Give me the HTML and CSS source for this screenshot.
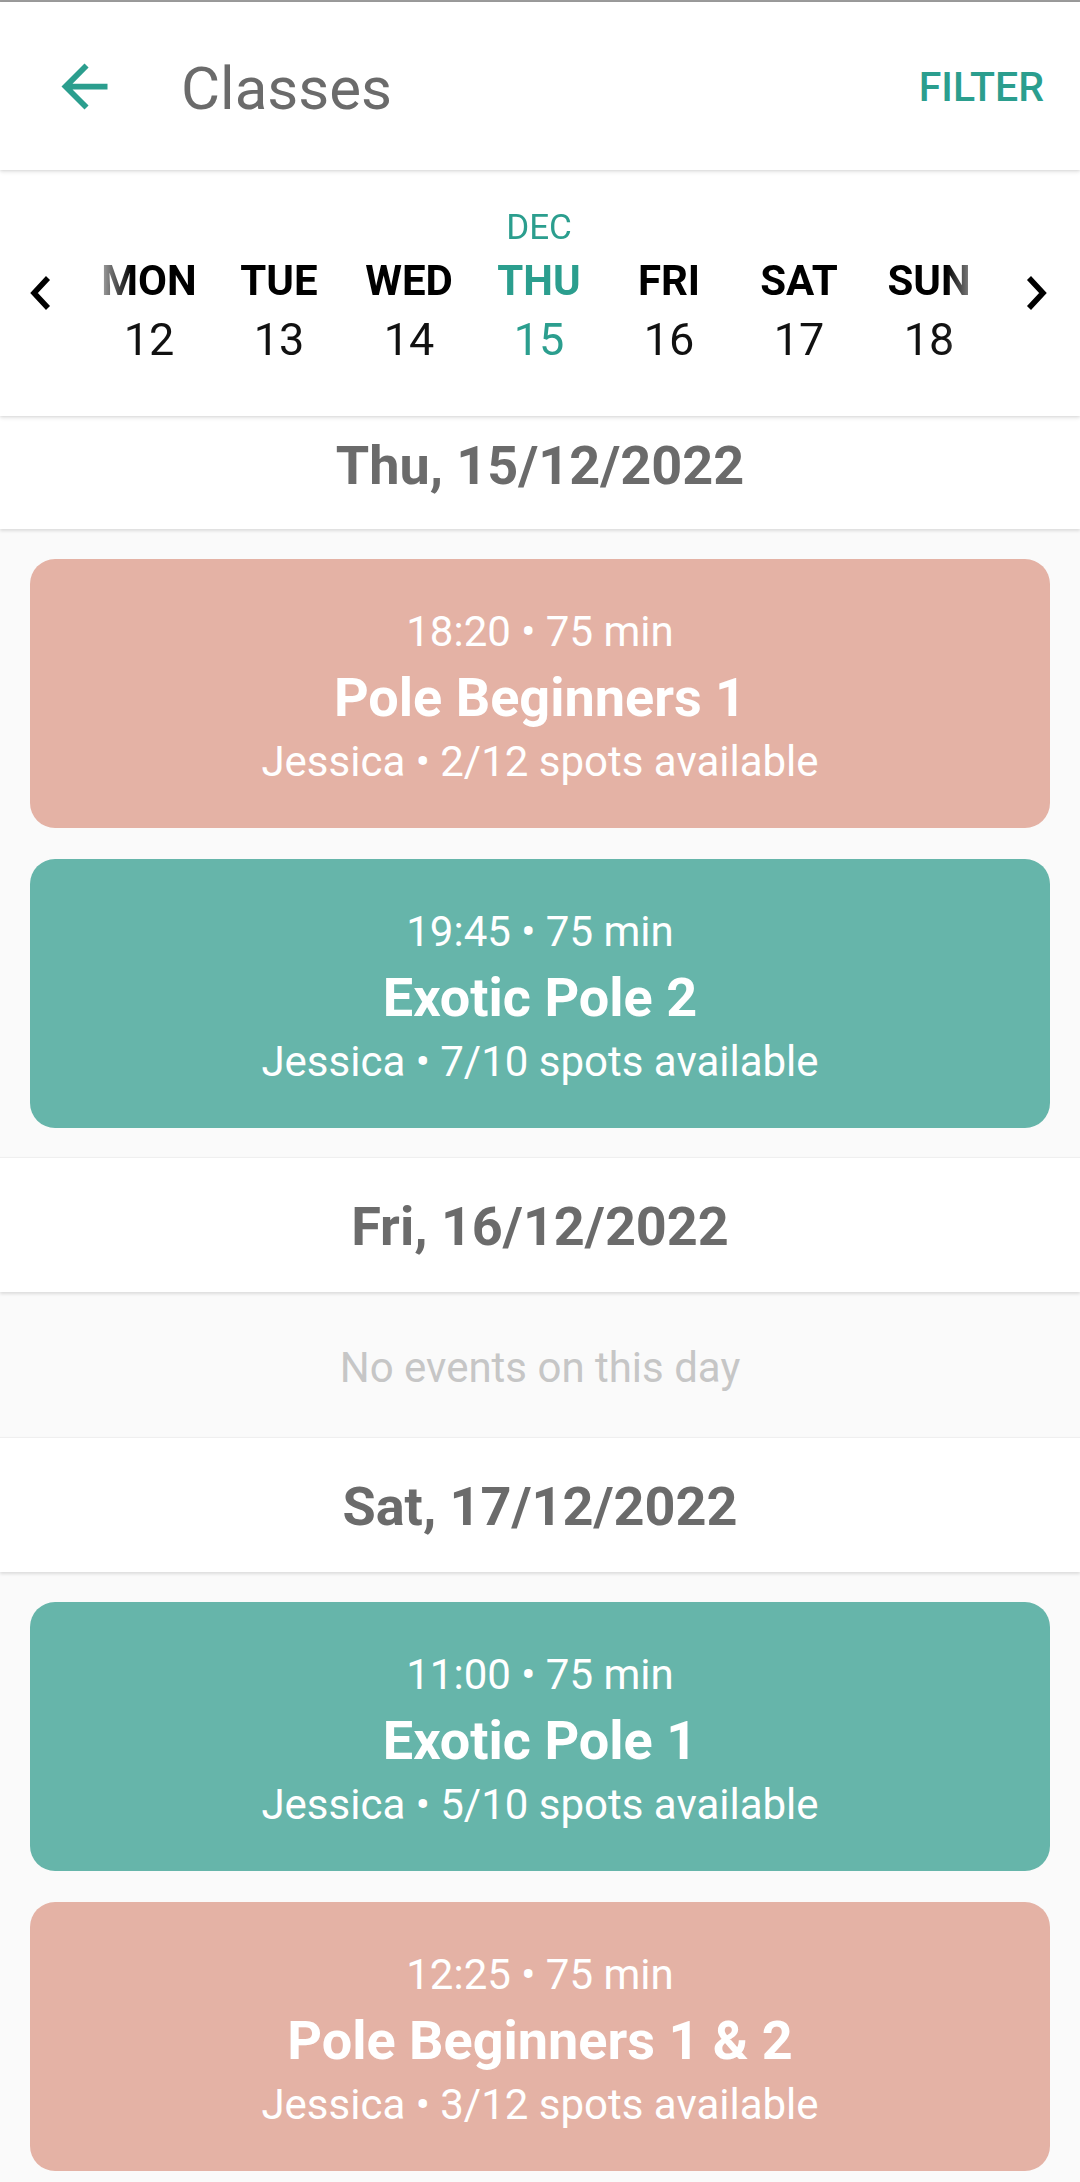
FILE: index.html
```html
<!DOCTYPE html>
<html lang="en">
<head>
<meta charset="utf-8">
<title>Classes</title>
<link rel="stylesheet" href="styles.css">
</head>
<body>
<div class="statusline"></div>
<header class="appbar">
  <button class="back" aria-label="Back">
    <svg viewBox="0 0 24 24" width="69" height="69"><path d="M20 11H7.83l5.59-5.59L12 4l-8 8 8 8 1.41-1.41L7.83 13H20v-2z" fill="#2b9e8e"/></svg>
  </button>
  <h1 class="title">Classes</h1>
  <span class="filter">FILTER</span>
</header>

<nav class="calendar">
  <button class="chev chev-left" aria-label="Previous week">
    <svg viewBox="0 0 25 36" width="25" height="36"><polyline points="20,3 6,18 20,33" fill="none" stroke="#000" stroke-width="5.5"/></svg>
  </button>
  <div class="days">
    <div class="day"><span class="month"></span><span class="dname">MON</span><span class="dnum">12</span></div>
    <div class="day"><span class="month"></span><span class="dname">TUE</span><span class="dnum">13</span></div>
    <div class="day"><span class="month"></span><span class="dname">WED</span><span class="dnum">14</span></div>
    <div class="day selected"><span class="month">DEC</span><span class="dname">THU</span><span class="dnum">15</span></div>
    <div class="day"><span class="month"></span><span class="dname">FRI</span><span class="dnum">16</span></div>
    <div class="day"><span class="month"></span><span class="dname">SAT</span><span class="dnum">17</span></div>
    <div class="day"><span class="month"></span><span class="dname">SUN</span><span class="dnum">18</span></div>
  </div>
  <button class="chev chev-right" aria-label="Next week">
    <svg viewBox="0 0 25 36" width="25" height="36"><polyline points="5,3 19,18 5,33" fill="none" stroke="#000" stroke-width="5.5"/></svg>
  </button>
</nav>

<main class="list">
  <section class="daysec">
    <h2 class="dayhead first">Thu, 15/12/2022</h2>
    <div class="cards">
      <div class="card salmon">
        <div class="ctime">18:20 • 75 min</div>
        <div class="cname">Pole Beginners 1</div>
        <div class="cinfo">Jessica • 2/12 spots available</div>
      </div>
      <div class="card teal">
        <div class="ctime">19:45 • 75 min</div>
        <div class="cname">Exotic Pole 2</div>
        <div class="cinfo">Jessica • 7/10 spots available</div>
      </div>
    </div>
  </section>
  <section class="daysec">
    <h2 class="dayhead">Fri, 16/12/2022</h2>
    <div class="empty">No events on this day</div>
  </section>
  <section class="daysec">
    <h2 class="dayhead">Sat, 17/12/2022</h2>
    <div class="cards">
      <div class="card teal">
        <div class="ctime">11:00 • 75 min</div>
        <div class="cname">Exotic Pole 1</div>
        <div class="cinfo">Jessica • 5/10 spots available</div>
      </div>
      <div class="card salmon">
        <div class="ctime">12:25 • 75 min</div>
        <div class="cname">Pole Beginners 1 &amp; 2</div>
        <div class="cinfo">Jessica • 3/12 spots available</div>
      </div>
    </div>
  </section>
</main>
</body>
</html>
```

FILE: styles.css
```css
* { box-sizing: border-box; }
html, body { margin: 0; padding: 0; }
body {
  width: 1080px;
  height: 2182px;
  overflow: hidden;
  background: #fafafa;
  font-family: Roboto, "Noto Sans", "Liberation Sans", sans-serif;
}
button {
  background: none;
  border: 0;
  padding: 0;
  margin: 0;
  font: inherit;
  cursor: pointer;
}
.statusline {
  height: 2px;
  background: #9b9b9b;
}
.appbar {
  position: relative;
  z-index: 3;
  height: 168px;
  background: #fff;
  display: flex;
  align-items: center;
  box-shadow: 0 2px 4px rgba(0,0,0,0.10), 0 1px 2px rgba(0,0,0,0.06);
}
.back {
  width: 69px;
  height: 69px;
  margin-left: 50px;
  display: flex;
}
.title {
  margin: 0 0 0 62px;
  padding-top: 5px;
  font-size: 60px;
  font-weight: 400;
  color: #6b6b6b;
  flex: 1;
  line-height: 1;
}
.filter {
  margin-right: 36px;
  padding-top: 3px;
  font-size: 41px;
  font-weight: 500;
  color: #2b9e8e;
  line-height: 1;
}
.calendar {
  position: relative;
  z-index: 2;
  height: 246px;
  background: #fff;
  display: flex;
  align-items: flex-start;
  box-shadow: 0 2px 4px rgba(0,0,0,0.10), 0 1px 2px rgba(0,0,0,0.06);
}
.chev {
  width: 84px;
  height: 36px;
  margin-top: 105px;
  display: flex;
}
.chev-left { justify-content: flex-start; padding-left: 28px; }
.chev-right { justify-content: flex-start; padding-left: 30px; width: 86px; }
.days {
  width: 910px;
  display: grid;
  grid-template-columns: repeat(7, 130px);
  padding-top: 36px;
  -webkit-mask-image: linear-gradient(to right, transparent 0, #000 48px, #000 862px, transparent 910px);
  mask-image: linear-gradient(to right, transparent 0, #000 48px, #000 862px, transparent 910px);
}
.day {
  display: flex;
  flex-direction: column;
  align-items: center;
  color: #000;
}
.month {
  height: 44px;
  line-height: 44px;
  font-size: 35px;
  color: #2b9e8e;
}
.dname {
  height: 62px;
  line-height: 62px;
  font-size: 42px;
  font-weight: 700;
}
.dnum {
  height: 56px;
  line-height: 56px;
  font-size: 45px;
  color: #111;
}
.day.selected .dname,
.day.selected .dnum { color: #2b9e8e; }

.daysec { display: flex; flex-direction: column; }
.dayhead {
  position: relative;
  z-index: 1;
  margin: 0;
  height: 134px;
  padding-top: 4px;
  line-height: 130px;
  text-align: center;
  font-size: 54px;
  font-weight: 700;
  color: #6b6b6b;
  background: #fff;
  box-shadow: 0 2px 3px rgba(0,0,0,0.12), 0 -1px 1px rgba(0,0,0,0.04);
}
.dayhead.first {
  height: 113px;
  padding-top: 0;
  line-height: 99px;
}
.cards {
  display: flex;
  flex-direction: column;
  gap: 31px;
  padding: 30px 30px 30px;
}
.card {
  height: 269px;
  border-radius: 25px;
  padding-top: 43px;
  color: #fff;
  text-align: center;
}
.card.salmon { background: #e4b2a5; }
.card.teal { background: #66b5aa; }
.ctime {
  height: 60px;
  line-height: 60px;
  font-size: 42px;
}
.cname {
  height: 72px;
  line-height: 72px;
  font-size: 54px;
  font-weight: 700;
}
.cinfo {
  height: 52px;
  line-height: 56px;
  font-size: 42px;
}
.empty {
  height: 146px;
  display: flex;
  align-items: center;
  justify-content: center;
  padding-top: 4px;
  font-size: 42px;
  color: #c6c6c6;
}
```
